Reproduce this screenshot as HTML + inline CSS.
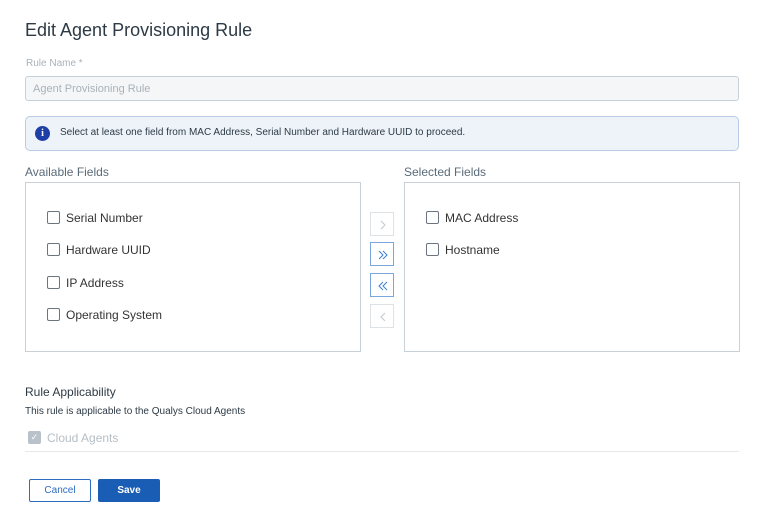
<!DOCTYPE html>
<html><head><style>
*{box-sizing:border-box;margin:0;padding:0}
body{width:768px;height:515px;background:#fff;font-family:"Liberation Sans",sans-serif;position:relative;overflow:hidden;color:#333}
.a{position:absolute}
.cb{position:absolute;width:13px;height:13px;border:1px solid #6b7580;border-radius:2px;background:#fff}
.lbl{position:absolute;font-size:12px;color:#333}
.btn{position:absolute;width:24px;height:24px;border:1px solid #dde2e7;background:#fff}
.btn svg{position:absolute;left:5px;top:5px}
.btn.on{border-color:#7aa6dd}
</style></head><body>
<div class="a" style="left:25px;top:20px;font-size:18px;color:#2d3a45">Edit Agent Provisioning Rule</div>
<div class="a" style="left:26px;top:58px;font-size:10px;color:#a8b2ba">Rule Name *</div>
<div class="a" style="left:25px;top:76px;width:714px;height:25px;border:1px solid #c9d1d8;border-radius:3px;background:#f4f6f8;font-size:11px;color:#a8b2ba;padding:6px 0 0 7px">Agent Provisioning Rule</div>
<div class="a" style="left:25px;top:116px;width:714px;height:35px;border:1px solid #b8cde3;border-radius:5px;background:#eef3f9"></div>
<div class="a" style="left:35px;top:126px;width:15px;height:15px;border-radius:50%;background:#1f3fa8;color:#fff;font-size:10px;font-weight:bold;text-align:center;line-height:15px;font-family:'Liberation Serif',serif">i</div>
<div class="a" style="left:60px;top:127px;font-size:10px;color:#2d3a45">Select at least one field from MAC Address, Serial Number and Hardware UUID to proceed.</div>
<div class="a" style="left:25px;top:165px;font-size:12px;color:#5a6b7a">Available Fields</div>
<div class="a" style="left:404px;top:165px;font-size:12px;color:#5a6b7a">Selected Fields</div>
<div class="a" style="left:25px;top:182px;width:336px;height:170px;border:1px solid #c9d1d8"></div>
<div class="a" style="left:404px;top:182px;width:336px;height:170px;border:1px solid #c9d1d8"></div>
<div class="cb" style="left:47px;top:211px"></div><div class="lbl" style="left:66px;top:211px">Serial Number</div>
<div class="cb" style="left:47px;top:243px"></div><div class="lbl" style="left:66px;top:243px">Hardware UUID</div>
<div class="cb" style="left:47px;top:276px"></div><div class="lbl" style="left:66px;top:276px">IP Address</div>
<div class="cb" style="left:47px;top:308px"></div><div class="lbl" style="left:66px;top:308px">Operating System</div>
<div class="cb" style="left:426px;top:211px"></div><div class="lbl" style="left:445px;top:211px">MAC Address</div>
<div class="cb" style="left:426px;top:243px"></div><div class="lbl" style="left:445px;top:243px">Hostname</div>
<div class="btn" style="left:370px;top:212px"><svg width="14" height="14"><path d="M5 3l4 4-4 4" fill="none" stroke="#c4c9ce" stroke-width="1"/></svg></div>
<div class="btn on" style="left:370px;top:242px"><svg width="14" height="14"><path d="M3 3l4 4-4 4M7 3l4 4-4 4" fill="none" stroke="#3b7fd1" stroke-width="1"/></svg></div>
<div class="btn on" style="left:370px;top:273px"><svg width="14" height="14"><path d="M7 3l-4 4 4 4M11 3l-4 4 4 4" fill="none" stroke="#3b7fd1" stroke-width="1"/></svg></div>
<div class="btn" style="left:370px;top:304px"><svg width="14" height="14"><path d="M9 3l-4 4 4 4" fill="none" stroke="#c4c9ce" stroke-width="1"/></svg></div>
<div class="a" style="left:25px;top:385px;font-size:12px;color:#2d3a45">Rule Applicability</div>
<div class="a" style="left:25px;top:406px;font-size:10px;color:#2d3a45">This rule is applicable to the Qualys Cloud Agents</div>
<div class="a" style="left:28px;top:431px;width:13px;height:13px;background:#b9c2ca;border-radius:2px;color:#fff;font-size:9px;text-align:center;line-height:13px">✓</div>
<div class="a" style="left:47px;top:431px;font-size:12px;color:#b5bec6">Cloud Agents</div>
<div class="a" style="left:25px;top:451px;width:714px;height:1px;background:#e5e9ec"></div>
<div class="a" style="left:29px;top:479px;width:62px;height:23px;border:1px solid #2e6cc0;border-radius:2px;font-size:10px;color:#2e6cc0;text-align:center;line-height:21px">Cancel</div>
<div class="a" style="left:98px;top:479px;width:62px;height:23px;background:#1a5db4;border-radius:2px;font-size:10px;color:#fff;font-weight:bold;text-align:center;line-height:23px">Save</div>
</body></html>
